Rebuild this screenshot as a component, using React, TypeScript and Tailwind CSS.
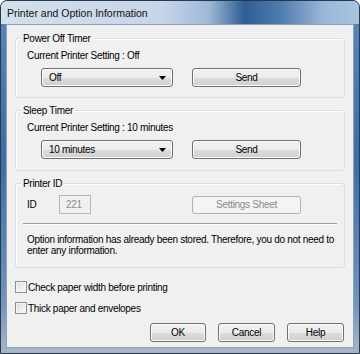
const font = "font-['Liberation_Sans',Arial,sans-serif]";

const btn =
  "flex items-center h-[19px] rounded-[3px] border border-[#707070] bg-[linear-gradient(#f2f2f2_0%,#ebebeb_50%,#dddddd_51%,#cfcfcf_100%)] shadow-[inset_0_0_0_1px_#fbfbfb] text-[10px] tracking-[-0.3px] text-black";

const txt = "text-[10px] tracking-[-0.3px]";

function Combo({ value }: { value: string }) {
  return (
    <div className={`${btn} w-[132px] justify-between pl-[7px] pr-[6px]`}>
      <span>{value}</span>
      <svg width="7" height="4" viewBox="0 0 7 4">
        <path d="M0 0h7L3.5 4z" fill="#000" />
      </svg>
    </div>
  );
}

function Group({ label, className, children }: { label: string; className: string; children: React.ReactNode }) {
  return (
    <div className={`relative ml-[8px] w-[330px] rounded-[3px] border border-[#d5dfe5] shadow-[inset_1px_1px_0_#fff] ${className}`}>
      <span className={`absolute -top-[7px] left-[5px] bg-[#f0f0f0] px-[2px] leading-[13px] ${txt}`}>{label}</span>
      {children}
    </div>
  );
}

function Check({ label }: { label: string }) {
  return (
    <div className="ml-[8px] flex h-[14px] items-center gap-[1px]">
      <div className="h-[12px] w-[12px] border border-[#8e8f8f] bg-[linear-gradient(135deg,#dcdcdc,#fbfbfb)] shadow-[inset_0_0_0_1px_#f4f4f4]" />
      <span className={txt}>{label}</span>
    </div>
  );
}

export default function App() {
  return (
    <div className={`${font} flex h-[354px] w-[360px] flex-col overflow-hidden rounded-t-[7px] border border-[#27394f] bg-[linear-gradient(to_bottom,#5c86b5_0%,#3e6da3_45%,#6f93bb_85%,#a9b6c4_100%)] text-black`}>
      <div className="flex h-[23px] shrink-0 items-center bg-[linear-gradient(to_right,#d3dfec_0%,#c6d6e8_45%,#9db9d8_58%,#2f5f94_68%,#4f7cae_78%,#9ab7d7_90%,#a9c3df_100%)] pl-[6px] pt-[1px]">
        <span className="text-[10.5px] leading-none text-[#111]">Printer and Option Information</span>
      </div>
      <div className="flex-1 pb-[5px] pl-[5px] pr-[5px]">
        <div className="flex h-[324px] flex-col border border-[#8fa3ba] bg-[#f0f0f0]">
          <Group label="Power Off Timer" className="mt-[13px] h-[60px]">
            <div className={`pl-[11px] pt-[10px] leading-[14px] ${txt}`}>Current Printer Setting : Off</div>
            <div className="mt-[5px] flex pl-[25px]">
              <Combo value="Off" />
              <div className={`${btn} ml-[19px] w-[109px] justify-center`}>Send</div>
            </div>
          </Group>
          <Group label="Sleep Timer" className="mt-[12px] h-[61px]">
            <div className={`pl-[11px] pt-[10px] leading-[14px] ${txt}`}>Current Printer Setting : 10 minutes</div>
            <div className="mt-[5px] flex pl-[25px]">
              <Combo value="10 minutes" />
              <div className={`${btn} ml-[19px] w-[109px] justify-center`}>Send</div>
            </div>
          </Group>
          <Group label="Printer ID" className="mt-[12px] h-[85px]">
            <div className="mt-[11px] flex h-[19px] items-center">
              <span className={`w-[43px] pl-[11px] ${txt}`}>ID</span>
              <div className={`flex h-[19px] w-[32px] items-center border border-[#b5b5b5] bg-[#f0f0f0] pl-[6px] text-[#8a8a8a] ${txt}`}>221</div>
              <div className={`ml-[101px] flex h-[18px] w-[109px] items-center justify-center rounded-[3px] border border-[#adb2b5] bg-[#f4f4f4] text-[#8b8b8b] ${txt}`}>
                Settings Sheet
              </div>
            </div>
            <div className="ml-[7px] mt-[9px] h-[2px] w-[314px] border-t border-[#a0a0a0] border-b border-b-white" />
            <p className={`mt-[9px] whitespace-nowrap pl-[11px] leading-[11px] ${txt}`}>
              Option information has already been stored. Therefore, you do not need to
              <br />
              enter any information.
            </p>
          </Group>
          <div className="mt-[12px] flex flex-col gap-[7px]">
            <Check label="Check paper width before printing" />
            <Check label="Thick paper and envelopes" />
          </div>
          <div className="mt-[8px] flex justify-end gap-[12px] pr-[9px]">
            <div className={`${btn} w-[56px] justify-center border-[#3c7fb1] shadow-[inset_0_0_0_1px_#bde4f7]`}>OK</div>
            <div className={`${btn} w-[57px] justify-center`}>Cancel</div>
            <div className={`${btn} w-[57px] justify-center`}>Help</div>
          </div>
        </div>
      </div>
    </div>
  );
}
